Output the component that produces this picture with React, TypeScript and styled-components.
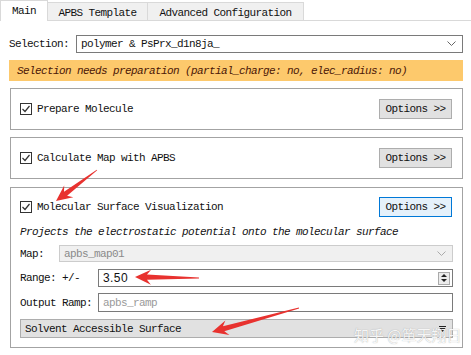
import React from "react";
import styled, { createGlobalStyle } from "styled-components";

const GlobalStyle = createGlobalStyle`
  html, body {
    margin: 0;
    padding: 0;
    background: #ffffff;
  }
`;

const mono = `"Liberation Mono", "DejaVu Sans Mono", monospace`;

const Page = styled.div`
  position: relative;
  width: 471px;
  height: 355px;
  overflow: hidden;
  background: #ffffff;
  font-family: ${mono};
  font-size: 11px;
  letter-spacing: -0.6px;
  color: #111;
`;

const TabBar = styled.div`
  display: flex;
  align-items: flex-end;
  height: 21px;
`;

const Tab = styled.div<{ active?: boolean; w: number }>`
  box-sizing: border-box;
  width: ${(p) => p.w}px;
  height: ${(p) => (p.active ? 21 : 19)}px;
  display: flex;
  align-items: center;
  justify-content: center;
  background: ${(p) => (p.active ? "#ffffff" : "#f0f0f0")};
  border: 1px solid #d9d9d9;
  border-bottom: ${(p) => (p.active ? "none" : "1px solid #d9d9d9")};
  margin-left: ${(p) => (p.active ? 0 : -1)}px;
  padding-top: ${(p) => (p.active ? 0 : 2)}px;
`;

const TabFill = styled.div`
  flex: 1;
  height: 1px;
  background: #d9d9d9;
`;

const Content = styled.div`
  padding: 14px 8px 0 9px;
  display: flex;
  flex-direction: column;
`;

const Row = styled.div<{ mt?: number }>`
  display: flex;
  align-items: center;
  margin-top: ${(p) => p.mt ?? 0}px;
`;

const Label = styled.div<{ w: number }>`
  width: ${(p) => p.w}px;
  flex: none;
`;

const Field = styled.div<{ h: number; variant?: "normal" | "disabled" | "button" }>`
  box-sizing: border-box;
  flex: 1;
  height: ${(p) => p.h}px;
  display: flex;
  align-items: center;
  padding: 0 6px 0 4px;
  background: ${(p) =>
    p.variant === "disabled" ? "#f0f0f0" : p.variant === "button" ? "#e1e1e1" : "#ffffff"};
  border: 1px solid
    ${(p) =>
      p.variant === "disabled" ? "#cccccc" : p.variant === "button" ? "#adadad" : "#7a7a7a"};
  color: ${(p) => (p.variant === "disabled" ? "#8a8a8a" : "#111")};
`;

const FieldText = styled.span<{ muted?: boolean }>`
  flex: 1;
  color: ${(p) => (p.muted ? "#9a9a9a" : "inherit")};
`;

const NumberText = styled.span`
  flex: 1;
  font-family: "Liberation Sans", Arial, sans-serif;
  font-size: 12px;
  letter-spacing: 0.4px;
  color: #111;
`;

const Spinner = styled.div`
  box-sizing: border-box;
  width: 12px;
  height: 13px;
  margin-right: -4px;
  border: 1px solid #aaaaaa;
  background: #ececec;
  display: flex;
  flex-direction: column;
  align-items: center;
  justify-content: space-around;
`;

const Banner = styled.div`
  margin-top: 7px;
  height: 21px;
  display: flex;
  align-items: center;
  padding-left: 8px;
  background: #fdc96c;
  color: #4a1606;
  font-style: italic;
`;

const Group = styled.div<{ mt: number; h: number }>`
  box-sizing: border-box;
  margin: ${(p) => p.mt}px 0 0 1px;
  height: ${(p) => p.h}px;
  border: 1px solid #a3a3a3;
  padding: 0 9px 0 9px;
  display: flex;
  flex-direction: column;
  justify-content: ${(p) => (p.h < 60 ? "center" : "flex-start")};
`;

const GroupHeader = styled.div<{ top?: number }>`
  display: flex;
  align-items: center;
  justify-content: space-between;
  margin-top: ${(p) => p.top ?? 0}px;
  height: 20px;
`;

const CheckLabel = styled.div`
  display: flex;
  align-items: center;
  gap: 5px;
`;

const Box = styled.div`
  box-sizing: border-box;
  width: 12px;
  height: 12px;
  border: 1px solid #333;
  background: #fff;
  display: flex;
  align-items: center;
  justify-content: center;
`;

const OptionsButton = styled.div<{ focus?: boolean }>`
  box-sizing: border-box;
  width: 73px;
  height: 20px;
  margin-right: 1px;
  display: flex;
  align-items: center;
  justify-content: center;
  background: ${(p) => (p.focus ? "#e5f1fb" : "#e1e1e1")};
  border: 1px solid ${(p) => (p.focus ? "#0078d7" : "#adadad")};
`;

const Description = styled.div`
  margin-top: 8px;
  font-style: italic;
  height: 14px;
  line-height: 14px;
`;

const Overlay = styled.svg`
  position: absolute;
  left: 0;
  top: 0;
  pointer-events: none;
`;

const Watermark = styled.div`
  position: absolute;
  left: 354px;
  top: 324px;
  font-family: "Noto Sans CJK SC", "Noto Sans", sans-serif;
  font-size: 15px;
  letter-spacing: 0;
  color: rgba(255, 255, 255, 0.92);
  text-shadow: 0 0 1px rgba(120, 120, 120, 0.7);
  white-space: nowrap;
`;

const Check = () => (
  <Box>
    <svg width="10" height="10" viewBox="0 0 10 10">
      <polyline points="1.5,5 4,7.5 8.5,2" fill="none" stroke="#333" strokeWidth="1.2" />
    </svg>
  </Box>
);

const Chevron = ({ color }: { color: string }) => (
  <svg width="9" height="6" viewBox="0 0 9 6">
    <polyline points="0.5,0.5 4.5,4.5 8.5,0.5" fill="none" stroke={color} strokeWidth="1" />
  </svg>
);

const arrowPoints = (tx: number, ty: number, hx: number, hy: number) => {
  const dx = hx - tx;
  const dy = hy - ty;
  const len = Math.hypot(dx, dy);
  const ux = dx / len;
  const uy = dy / len;
  const px = -uy;
  const py = ux;
  const headLen = 16;
  const neck = 2.6;
  const barb = 7.5;
  const nx = hx - ux * (headLen - 4);
  const ny = hy - uy * (headLen - 4);
  const bx = hx - ux * headLen;
  const by = hy - uy * headLen;
  const pts = [
    [tx + px * 0.4, ty + py * 0.4],
    [nx + px * neck, ny + py * neck],
    [bx + px * barb, by + py * barb],
    [hx, hy],
    [bx - px * barb, by - py * barb],
    [nx - px * neck, ny - py * neck],
    [tx - px * 0.4, ty - py * 0.4],
  ];
  return pts.map((p) => p.map((v) => v.toFixed(1)).join(",")).join(" ");
};

const arrows = [
  { tx: 97, ty: 170, hx: 56, hy: 201 },
  { tx: 199, ty: 278, hx: 135, hy: 277 },
  { tx: 299, ty: 308, hx: 212, hy: 332 },
];

const App: React.FC = () => {
  return (
    <Page>
      <GlobalStyle />
      <TabBar>
        <Tab active w={48}>Main</Tab>
        <Tab w={101}>APBS Template</Tab>
        <Tab w={157}>Advanced Configuration</Tab>
        <TabFill />
      </TabBar>
      <Content>
        <Row>
          <Label w={67}>Selection:</Label>
          <Field h={18}>
            <FieldText>polymer &amp; PsPrx_d1n8ja_</FieldText>
            <Chevron color="#666" />
          </Field>
        </Row>
        <Banner>Selection needs preparation (partial_charge: no, elec_radius: no)</Banner>

        <Group mt={7} h={42}>
          <GroupHeader>
            <CheckLabel>
              <Check />
              Prepare Molecule
            </CheckLabel>
            <OptionsButton>Options &gt;&gt;</OptionsButton>
          </GroupHeader>
        </Group>

        <Group mt={7} h={42}>
          <GroupHeader>
            <CheckLabel>
              <Check />
              Calculate Map with APBS
            </CheckLabel>
            <OptionsButton>Options &gt;&gt;</OptionsButton>
          </GroupHeader>
        </Group>

        <Group mt={8} h={161}>
          <GroupHeader top={9}>
            <CheckLabel>
              <Check />
              Molecular Surface Visualization
            </CheckLabel>
            <OptionsButton focus>Options &gt;&gt;</OptionsButton>
          </GroupHeader>
          <Description>Projects the electrostatic potential onto the molecular surface</Description>
          <Row mt={6}>
            <Label w={39}>Map:</Label>
            <Field h={17} variant="disabled">
              <FieldText>apbs_map01</FieldText>
              <Chevron color="#aaa" />
            </Field>
          </Row>
          <Row mt={7}>
            <Label w={78}>Range: +/-</Label>
            <Field h={18}>
              <NumberText>3.50</NumberText>
              <Spinner>
                <svg width="6" height="3" viewBox="0 0 6 3">
                  <polygon points="0,3 3,0 6,3" fill="#222" />
                </svg>
                <svg width="6" height="3" viewBox="0 0 6 3">
                  <polygon points="0,0 6,0 3,3" fill="#222" />
                </svg>
              </Spinner>
            </Field>
          </Row>
          <Row mt={6}>
            <Label w={78}>Output Ramp:</Label>
            <Field h={19}>
              <FieldText muted>apbs_ramp</FieldText>
            </Field>
          </Row>
          <Row mt={7}>
            <Field h={19} variant="button">
              <FieldText>Solvent Accessible Surface</FieldText>
              <svg width="7" height="6" viewBox="0 0 7 6">
                <line x1="0" y1="0.5" x2="7" y2="0.5" stroke="#222" />
                <polygon points="0.5,2 6.5,2 3.5,6" fill="#222" />
              </svg>
            </Field>
          </Row>
        </Group>
      </Content>

      <Overlay width="471" height="355" viewBox="0 0 471 355">
        {arrows.map((a, i) => (
          <polygon key={i} points={arrowPoints(a.tx, a.ty, a.hx, a.hy)} fill="#e8322f" />
        ))}
      </Overlay>
      <Watermark>知乎 @箪天翔日</Watermark>
    </Page>
  );
};

export default App;
